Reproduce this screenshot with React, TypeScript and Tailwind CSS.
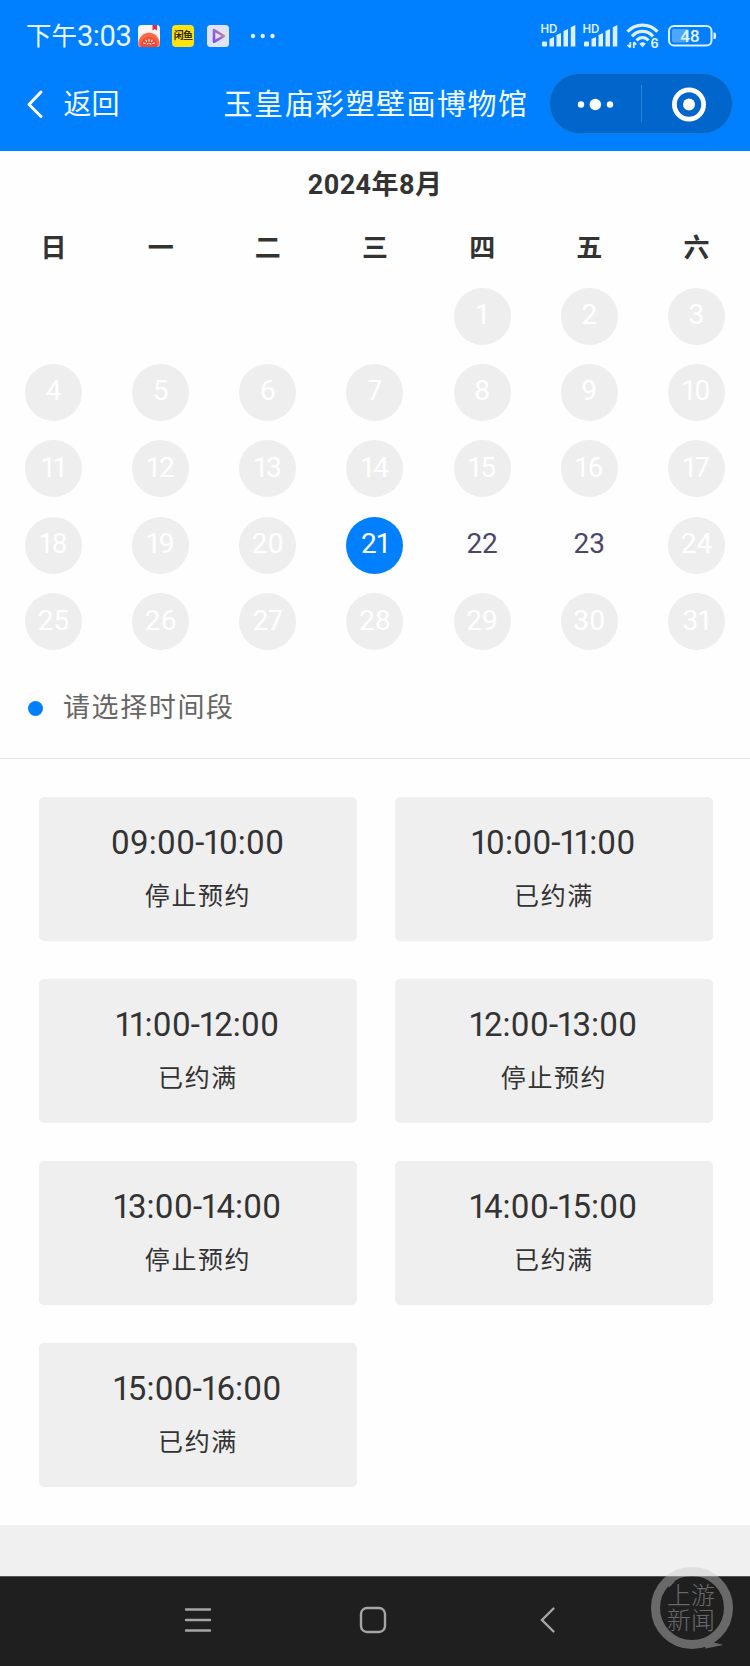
import type { ReactNode } from "react";

const WEEKDAYS = ["日", "一", "二", "三", "四", "五", "六"];

// 2024-08-01 is a Thursday
const LEADING_BLANKS = 4;
const DAYS = Array.from({ length: 31 }, (_, i) => i + 1);
const OPEN_DAYS = [22, 23];
const SELECTED_DAY = 21;

const SLOTS = [
  { time: "09:00-10:00", status: "停止预约" },
  { time: "10:00-11:00", status: "已约满" },
  { time: "11:00-12:00", status: "已约满" },
  { time: "12:00-13:00", status: "停止预约" },
  { time: "13:00-14:00", status: "停止预约" },
  { time: "14:00-15:00", status: "已约满" },
  { time: "15:00-16:00", status: "已约满" },
];

const Signal = () => (
  <svg className="overflow-visible" width="36" height="24" viewBox="0 0 36 24" fill="#dcf0ff">
    <text x="-0.5" y="8.5" fontSize="11.5" fontWeight="600" fontFamily="Inter, sans-serif">
      HD
    </text>
    <rect x="1" y="17.5" width="5" height="5" rx="1.2" />
    <path d="M8.500 15l4.500-2v9.500H8.500z" />
    <path d="M15.500 11l4.500-2v13.500h-4.500z" />
    <path d="M22.500 7l4.500-2v17.500h-4.500z" />
    <path d="M29.800 3.200l4.500-2.200v21.500h-4.500z" />
  </svg>
);

const Wifi = () => (
  <svg className="overflow-visible" width="34" height="26" viewBox="0 0 34 26" fill="none" stroke="#dcf0ff">
    <path d="M1.500 8.700C9.500 0 23.500 0 31.500 8.700" strokeWidth="3.200" />
    <path d="M6 13.300c6-6.600 15-6.600 21 0" strokeWidth="3.200" />
    <path d="M10.500 17.600c3.600-4 8.400-4 12 0" strokeWidth="3" />
    <path d="M13.200 20.800c2-2 4.600-2 6.600 0l-3.300 3.500z" fill="#dcf0ff" stroke="none" />
    <path d="M4.300 19v5.500M4.300 24.500L1.500 21.800M7.800 25V19.200M7.800 19.200l2.500 2.500" strokeWidth="1.800" />
    <text x="24.500" y="25" fontSize="12.500" fontWeight="700" fontFamily="Inter, sans-serif" fill="#dcf0ff" stroke="none">
      6
    </text>
  </svg>
);

const TomatoApp = () => (
  <svg width="22" height="22" viewBox="0 0 22 22">
    <defs>
      <clipPath id="tomato">
        <rect width="22" height="22" rx="3.5" />
      </clipPath>
    </defs>
    <g clipPath="url(#tomato)">
      <rect width="22" height="22" fill="#fbf4f2" />
      <circle cx="11" cy="18.500" r="10.700" fill="#f8694a" />
      <circle cx="11" cy="20" r="8" fill="#f4472f" />
      <path d="M14.500 0h4.500v5.500l-2.200-1.500-2.300 1.500z" fill="#e02a4a" />
      <path d="M11 14v2M7.800 15l.8 1.600M14.200 15l-.8 1.600M5.500 18l1.600.5M16.500 18l-1.600.5M9.300 19.200l.8-.8M12.700 19.200l-.8-.8" stroke="#fff" strokeWidth="1.100" strokeLinecap="round" />
    </g>
  </svg>
);

const FishApp = () => (
  <span className="flex h-[22px] w-[22px] items-center justify-center rounded bg-[#ffe20f]">
    <span className="text-[10px] leading-none font-bold tracking-[-0.8px] whitespace-nowrap text-[#2d2b12]">闲鱼</span>
  </span>
);

const PlayApp = () => (
  <svg width="22" height="22" viewBox="0 0 22 22" fill="none">
    <defs>
      <linearGradient id="play" x1="6" y1="18" x2="19" y2="8" gradientUnits="userSpaceOnUse">
        <stop stopColor="#7a4bf0" />
        <stop offset="0.600" stopColor="#9b6ad0" />
        <stop offset="1" stopColor="#ff9a4a" />
      </linearGradient>
    </defs>
    <rect width="22" height="22" rx="3.500" fill="#dfe3f5" />
    <path d="M7 5.200v11.600L17 11z" stroke="url(#play)" strokeWidth="2.600" strokeLinejoin="round" />
  </svg>
);

const Battery = () => (
  <svg width="49" height="22" viewBox="0 0 49 22">
    <rect x="1" y="1" width="42.500" height="19.500" rx="5" fill="none" stroke="#dcf0ff" strokeWidth="2" />
    <rect x="4" y="4" width="17" height="13.500" rx="2" fill="#4da6ff" />
    <path d="M45.500 7.500h1a1.500 1.500 0 011.500 1.500v3.500a1.500 1.500 0 01-1.500 1.500h-1z" fill="#dcf0ff" />
    <text x="22" y="16.700" textAnchor="middle" fontSize="17" fontWeight="500" fontFamily="Roboto, sans-serif" fill="#e8f6ff">
      48
    </text>
  </svg>
);

const StatusBar = () => (
  <div className="flex h-[71px] items-center pr-[33px] pl-[26px] text-[#e6f5ff]">
    <div className="flex w-[111.500px] items-center whitespace-nowrap">
      <span className="pt-[2px] text-[25.500px] leading-none">下午</span>
      <span className="pt-px text-[29px] leading-none tracking-[-0.600px]">3:03</span>
    </div>
    <div className="flex items-center gap-[12.500px]">
      <TomatoApp />
      <FishApp />
      <PlayApp />
    </div>
    <svg className="ml-[21px]" width="26" height="6" viewBox="0 0 26 6" fill="#dcf0ff">
      <circle cx="3" cy="3" r="2.200" />
      <circle cx="12.700" cy="3" r="2.200" />
      <circle cx="22.500" cy="3" r="2.200" />
    </svg>
    <div className="ml-auto flex items-center">
      <Signal />
      <span className="w-[6px]" />
      <Signal />
      <span className="w-[7px]" />
      <Wifi />
      <span className="w-[8px]" />
      <Battery />
    </div>
  </div>
);

const NavBar = () => (
  <div className="flex h-[65px] items-center pr-[17px] pl-[26px] text-[#f0faff]">
    <svg className="mt-px" width="18" height="30" viewBox="0 0 18 30" fill="none" stroke="#fff" strokeWidth="3" strokeLinecap="round" strokeLinejoin="round">
      <path d="M15 3L3 15.500l12 12" />
    </svg>
    <span className="ml-[19.500px] w-[160px] pt-[3px] text-[28px] leading-none">返回</span>
    <h1 className="pt-[3px] text-[29px] leading-none tracking-[1.500px] whitespace-nowrap">玉皇庙彩塑壁画博物馆</h1>
    <div className="ml-auto flex h-[61px] w-[184px] items-center rounded-full border border-[#1a7ad6] bg-[#0066cc]">
      <svg width="91" height="40" viewBox="0 0 91 40" fill="#fff">
        <circle cx="31" cy="20.500" r="3.200" />
        <circle cx="45.300" cy="20.500" r="5.800" />
        <circle cx="60" cy="20.500" r="3.200" />
      </svg>
      <span className="h-[37px] w-px bg-[#2b84dc]" />
      <svg width="90" height="40" viewBox="0 0 90 40" fill="none">
        <circle cx="47" cy="20.500" r="14.600" stroke="#fff" strokeWidth="4.800" />
        <circle cx="47" cy="20.500" r="6" fill="#fff" />
      </svg>
    </div>
  </div>
);

const DayCell = ({ day }: { day: number }) => {
  let tone = "bg-[#eee] text-white";
  if (day === SELECTED_DAY) tone = "bg-[#0080ff] text-white";
  if (OPEN_DAYS.includes(day)) tone = "text-[#4b4768]";

  return (
    <div className="flex justify-center">
      <button className={`h-[57px] w-[57px] rounded-full pb-[2px] text-[28px] leading-none ${tone}`}>{day}</button>
    </div>
  );
};

const Calendar = () => (
  <section>
    <h2 className="pt-[14px] text-center text-[27px] leading-[40px] font-bold tracking-[0.300px] text-[#333]">2024年8月</h2>
    <div className="mt-[23px] grid grid-cols-7 text-center text-[26px] leading-[40px] font-bold text-[#333]">
      {WEEKDAYS.map((name) => (
        <span key={name}>{name}</span>
      ))}
    </div>
    <div className="mt-[19.600px] grid grid-cols-7 gap-y-[19.400px]">
      {Array.from({ length: LEADING_BLANKS }, (_, i) => (
        <span key={i} />
      ))}
      {DAYS.map((day) => (
        <DayCell key={day} day={day} />
      ))}
    </div>
  </section>
);

const TimeSlots = () => (
  <section>
    <div className="flex h-[108.400px] items-center border-b border-[#e6e6e6] pl-7">
      <span className="mt-[9px] h-[15px] w-[15px] rounded-full bg-[#0080ff]" />
      <span className="mt-[10px] ml-[20px] text-[27px] leading-none tracking-[1.600px] text-[#666]">请选择时间段</span>
    </div>
    <div className="grid grid-cols-2 gap-[38px] pt-[38px] pr-[37.500px] pb-[38px] pl-[38.500px]">
      {SLOTS.map((slot) => (
        <div key={slot.time} className="h-[144px] rounded-[5px] bg-[#efefef] pt-[26px] text-center text-[#333]">
          <p className="text-[33px] leading-[40px]">{slot.time}</p>
          <p className="mt-[14px] pl-px text-[25px] leading-[40px] tracking-[1.600px]">{slot.status}</p>
        </div>
      ))}
    </div>
  </section>
);

const KeyButton = ({ children }: { children: ReactNode }) => (
  <svg width="30" height="30" viewBox="0 0 30 30" fill="none" stroke="#a6a6a6" strokeWidth="2.400" strokeLinecap="round">
    {children}
  </svg>
);

const Watermark = () => (
  <div className="absolute right-[14px] bottom-[14px] h-[88px] w-[88px] opacity-[0.430]">
    <svg className="absolute inset-0" width="88" height="88" viewBox="0 0 88 88" fill="#cacaca">
      <circle cx="44" cy="44" r="36.500" fill="none" stroke="#cacaca" strokeWidth="9" />
      <path d="M17 15l10 2.500-6 6z" />
      <path d="M56 80l9.500-4 .5 2.500 9.500 2.500-18 3.500z" />
    </svg>
    <p className="relative pt-[20px] pr-[2px] text-center text-[24px] leading-[25px] font-light text-[#cacaca]">
      上游
      <br />
      新闻
    </p>
  </div>
);

export default function App() {
  return (
    <div className="relative flex h-[1666px] w-[750px] flex-col overflow-hidden bg-[#f0f0f0] font-['Roboto','Noto_Sans_CJK_SC',sans-serif] [font-feature-settings:'pnum']">
      <header className="h-[151px] bg-[#0080ff]">
        <StatusBar />
        <NavBar />
      </header>
      <main className="h-[1374px] bg-[#fefefe]">
        <Calendar />
        <TimeSlots />
      </main>
      <footer className="mt-auto flex h-[90px] items-center border-t border-[#555] bg-[#1f1f1f] pb-[4px] pl-[182.500px]">
        <KeyButton>
          <path d="M3 4.500h24M3 15h24M3 25.500h24" />
        </KeyButton>
        <span className="w-[145px]" />
        <KeyButton>
          <rect x="3" y="3" width="24" height="24" rx="6" />
        </KeyButton>
        <span className="w-[145px]" />
        <KeyButton>
          <path d="M20.500 3.500L9 15l11.500 11.500" />
        </KeyButton>
      </footer>
      <Watermark />
    </div>
  );
}
